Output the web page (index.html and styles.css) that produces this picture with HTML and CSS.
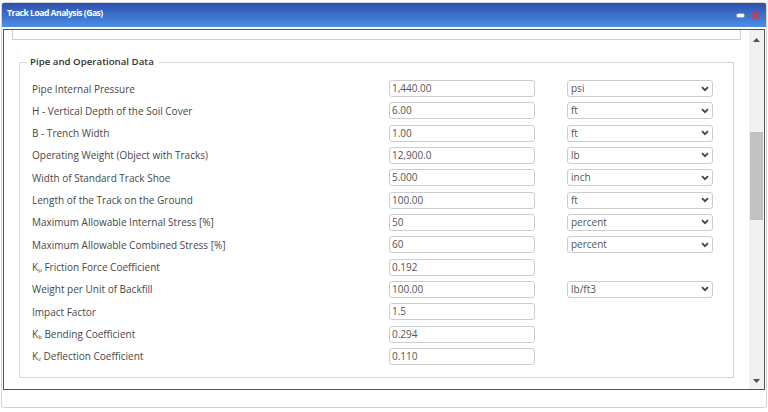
FILE: index.html
```html
<!DOCTYPE html>
<html>
<head>
<meta charset="utf-8">
<link rel="stylesheet" href="styles.css">
</head>
<body>
<div class="window">
  <div class="titlebar">
    <span class="title">Track Load Analysis (Gas)</span>
    <div class="controls">
      <span class="min"></span>
      <svg class="close" width="7" height="7" viewBox="0 0 7 7"><path d="M1 1L6 6M6 1L1 6" stroke="#e8313b" stroke-width="2" stroke-linecap="square"/></svg>
    </div>
  </div>
  <div class="body">
    <div class="frame">
      <div class="content">
        <div class="topbox"></div>
        <fieldset class="group">
          <legend>Pipe and Operational Data</legend>
          <div class="grid">
            <div class="label">Pipe Internal Pressure</div>
            <div class="input">1,440.00</div>
            <div class="select"><span>psi</span><svg width="8" height="6" viewBox="0 0 8 6"><path d="M1 1.2L4 4.2L7 1.2" fill="none" stroke="#444" stroke-width="1.8"/></svg></div>

            <div class="label">H - Vertical Depth of the Soil Cover</div>
            <div class="input">6.00</div>
            <div class="select"><span>ft</span><svg width="8" height="6" viewBox="0 0 8 6"><path d="M1 1.2L4 4.2L7 1.2" fill="none" stroke="#444" stroke-width="1.8"/></svg></div>

            <div class="label">B - Trench Width</div>
            <div class="input">1.00</div>
            <div class="select"><span>ft</span><svg width="8" height="6" viewBox="0 0 8 6"><path d="M1 1.2L4 4.2L7 1.2" fill="none" stroke="#444" stroke-width="1.8"/></svg></div>

            <div class="label">Operating Weight (Object with Tracks)</div>
            <div class="input">12,900.0</div>
            <div class="select"><span>lb</span><svg width="8" height="6" viewBox="0 0 8 6"><path d="M1 1.2L4 4.2L7 1.2" fill="none" stroke="#444" stroke-width="1.8"/></svg></div>

            <div class="label">Width of Standard Track Shoe</div>
            <div class="input">5.000</div>
            <div class="select"><span>inch</span><svg width="8" height="6" viewBox="0 0 8 6"><path d="M1 1.2L4 4.2L7 1.2" fill="none" stroke="#444" stroke-width="1.8"/></svg></div>

            <div class="label">Length of the Track on the Ground</div>
            <div class="input">100.00</div>
            <div class="select"><span>ft</span><svg width="8" height="6" viewBox="0 0 8 6"><path d="M1 1.2L4 4.2L7 1.2" fill="none" stroke="#444" stroke-width="1.8"/></svg></div>

            <div class="label">Maximum Allowable Internal Stress [%]</div>
            <div class="input">50</div>
            <div class="select"><span>percent</span><svg width="8" height="6" viewBox="0 0 8 6"><path d="M1 1.2L4 4.2L7 1.2" fill="none" stroke="#444" stroke-width="1.8"/></svg></div>

            <div class="label">Maximum Allowable Combined Stress [%]</div>
            <div class="input">60</div>
            <div class="select"><span>percent</span><svg width="8" height="6" viewBox="0 0 8 6"><path d="M1 1.2L4 4.2L7 1.2" fill="none" stroke="#444" stroke-width="1.8"/></svg></div>

            <div class="label">K<sub>μ</sub> Friction Force Coefficient</div>
            <div class="input">0.192</div>
            <div class="empty"></div>

            <div class="label">Weight per Unit of Backfill</div>
            <div class="input">100.00</div>
            <div class="select"><span>lb/ft3</span><svg width="8" height="6" viewBox="0 0 8 6"><path d="M1 1.2L4 4.2L7 1.2" fill="none" stroke="#444" stroke-width="1.8"/></svg></div>

            <div class="label">Impact Factor</div>
            <div class="input">1.5</div>
            <div class="empty"></div>

            <div class="label">K<sub>b</sub> Bending Coefficient</div>
            <div class="input">0.294</div>
            <div class="empty"></div>

            <div class="label">K<sub>z</sub> Deflection Coefficient</div>
            <div class="input">0.110</div>
            <div class="empty"></div>
          </div>
        </fieldset>
      </div>
      <div class="scrollbar">
        <div class="sb-btn up"><svg width="7" height="4" viewBox="0 0 7 4"><path d="M0 4L3.5 0L7 4Z" fill="#505050"/></svg></div>
        <div class="sb-track"><div class="sb-thumb"></div></div>
        <div class="sb-btn down"><svg width="7" height="4" viewBox="0 0 7 4"><path d="M0 0L3.5 4L7 0Z" fill="#505050"/></svg></div>
      </div>
    </div>
  </div>
  <div class="footer"></div>
</div>
</body>
</html>
```

FILE: styles.css
```css
html, body {
  margin: 0;
  padding: 0;
  background: #ffffff;
}
body {
  font-family: "Open Sans", "DejaVu Sans", sans-serif;
  font-size: 10px;
  color: #444;
}
.window {
  margin: 2px 0 0 1px;
  width: 764px;
  border: 1px solid #d2d2d2;
  border-radius: 3px;
  background: #fff;
  overflow: hidden;
}
.titlebar {
  height: 24px;
  background: linear-gradient(#2f4fae, #4b8fe4);
  display: flex;
  align-items: flex-start;
  justify-content: space-between;
  padding: 0 7px 0 5px;
}
.title {
  color: #fff;
  font-weight: 700;
  font-size: 8.6px;
  letter-spacing: -0.5px;
  line-height: 12px;
  padding-top: 4px;
}
.controls {
  display: flex;
  align-items: center;
  gap: 8px;
  padding-top: 9px;
}
.min {
  display: block;
  width: 7px;
  height: 3px;
  background: #fff;
  border-radius: 1px;
  box-shadow: 0 0 0 0.5px #c9d6f3;
  margin-left: -1px;
}
.close {
  display: block;
}
.body {
  padding: 2px 1px 0 1px;
}
.frame {
  height: 359px;
  border: 1px solid #555;
  display: flex;
}
.content {
  flex: 1;
  overflow: hidden;
}
.topbox {
  margin-left: 8px;
  width: 727px;
  height: 9px;
  border: 1px solid #cfcfcf;
  border-top: none;
}
.group {
  margin: 15px 0 0 15px;
  width: 713px;
  padding: 0 0 12px 0;
  border: 1px solid #d6d6d6;
  min-width: 0;
  box-sizing: content-box;
}
.group legend {
  margin-left: 7px;
  padding: 0 5px 0 3px;
  font-weight: 600;
  font-size: 9.7px;
  line-height: 14px;
  color: #333;
}
.grid {
  display: grid;
  grid-template-columns: 325px 146px 146px;
  column-gap: 32px;
  grid-auto-rows: 17px;
  row-gap: 5.33px;
  padding: 11px 0 0 12px;
  align-items: center;
}
.label {
  white-space: nowrap;
  color: #474747;
  line-height: 14px;
}
.label sub {
  font-size: 6px;
  vertical-align: -1px;
  line-height: 0;
}
.input, .select {
  box-sizing: border-box;
  height: 17px;
  border: 1px solid #cdcdcd;
  border-radius: 3px;
  background: #fff;
  color: #555;
  padding: 0 3px 0 2px;
  line-height: 15px;
  white-space: nowrap;
}
.select {
  display: flex;
  align-items: center;
  justify-content: space-between;
  padding-left: 3px;
}
.select svg {
  display: block;
}
.scrollbar {
  width: 15px;
  background: #f1f1f1;
  display: flex;
  flex-direction: column;
}
.sb-btn {
  display: flex;
  align-items: center;
  justify-content: center;
}
.sb-btn.up {
  height: 20px;
}
.sb-btn.down {
  height: 17px;
}
.sb-track {
  flex: 1;
  padding-top: 82px;
}
.sb-thumb {
  margin: 0 1px 0 1px;
  height: 88px;
  background: #c1c1c1;
}
.footer {
  height: 17px;
}
```
